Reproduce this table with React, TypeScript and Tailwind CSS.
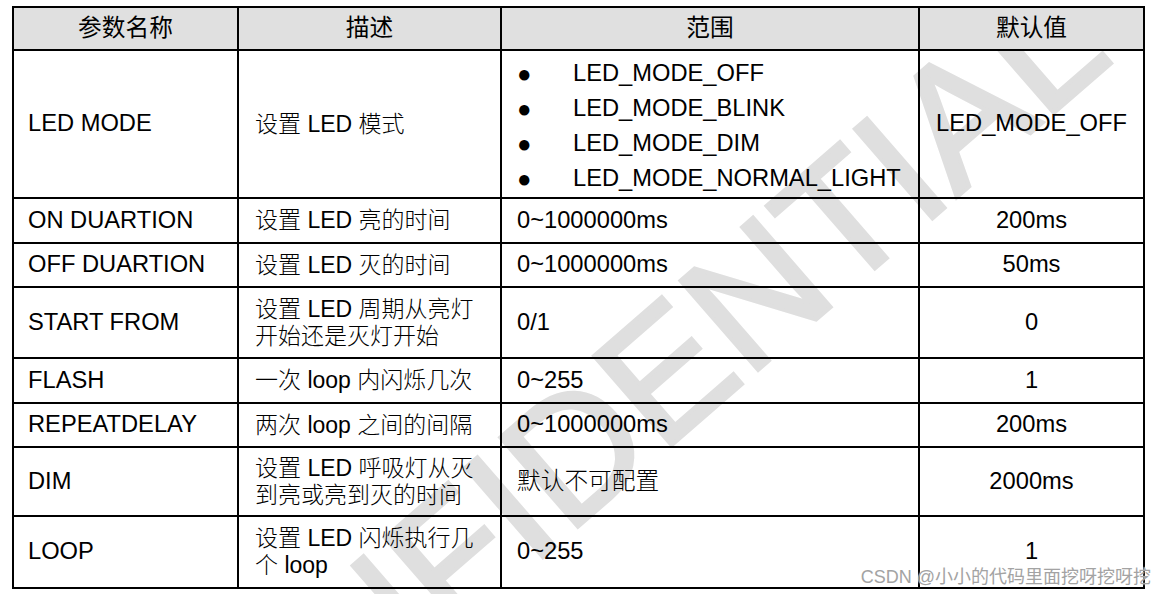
import React from 'react';

type Row = {
  name: string;
  desc: string[];
  range: string | string[];
  def: string;
  h: string;
};

const rows: Row[] = [
  { name: 'LED MODE', desc: ['设置 LED 模式'], range: ['LED_MODE_OFF', 'LED_MODE_BLINK', 'LED_MODE_DIM', 'LED_MODE_NORMAL_LIGHT'], def: 'LED_MODE_OFF', h: 'h-[148px]' },
  { name: 'ON DUARTION', desc: ['设置 LED 亮的时间'], range: '0~1000000ms', def: '200ms', h: 'h-[45px]' },
  { name: 'OFF DUARTION', desc: ['设置 LED 灭的时间'], range: '0~1000000ms', def: '50ms', h: 'h-[44px]' },
  { name: 'START FROM', desc: ['设置 LED 周期从亮灯', '开始还是灭灯开始'], range: '0/1', def: '0', h: 'h-[71px]' },
  { name: 'FLASH', desc: ['一次 loop 内闪烁几次'], range: '0~255', def: '1', h: 'h-[45px]' },
  { name: 'REPEATDELAY', desc: ['两次 loop 之间的间隔'], range: '0~1000000ms', def: '200ms', h: 'h-[44px]' },
  { name: 'DIM', desc: ['设置 LED 呼吸灯从灭', '到亮或亮到灭的时间'], range: '默认不可配置', def: '2000ms', h: 'h-[69px]' },
  { name: 'LOOP', desc: ['设置 LED 闪烁执行几', '个 loop'], range: '0~255', def: '1', h: 'h-[72px]' },
];

const cell = 'border-2 border-black align-middle';

const App: React.FC = () => {
  return (
    <div
      className="relative w-[1166px] h-[594px] overflow-hidden bg-white pl-[12px] pt-[6px] text-black"
      style={{ fontFamily: '"Liberation Sans", "Noto Sans CJK SC", sans-serif' }}
    >
      {/* watermark, drawn under the table */}
      <div className="absolute left-[600px] top-[428px] z-0 -translate-x-1/2 -translate-y-1/2 -rotate-[41deg] whitespace-nowrap text-[172px] leading-none text-[#dfdfdf] [-webkit-text-stroke:4px_#dfdfdf]">
        CONFIDENTIAL
      </div>

      <table className="relative z-10 w-[1133px] table-fixed border-collapse text-[23.7px]">
        <colgroup>
          <col className="w-[225px]" />
          <col className="w-[263px]" />
          <col className="w-[418px]" />
          <col className="w-[225px]" />
        </colgroup>
        <thead>
          <tr className="h-[43px] bg-[#e0e0e0]">
            <th className={`${cell} font-normal text-center`}>参数名称</th>
            <th className={`${cell} font-normal text-center`}>描述</th>
            <th className={`${cell} font-normal text-center`}>范围</th>
            <th className={`${cell} font-normal text-center`}>默认值</th>
          </tr>
        </thead>
        <tbody className="font-light">
          {rows.map((r) => (
            <tr key={r.name} className={r.h}>
              <td className={`${cell} pl-[14px]`}>{r.name}</td>
              <td className={`${cell} pl-[16px] text-[23px] leading-[27px]`}>
                {r.desc.map((d, i) => (
                  <div key={i}>{d}</div>
                ))}
              </td>
              <td className={`${cell} pl-[15px]`}>
                {Array.isArray(r.range) ? (
                  <ul className="pt-[4px]">
                    {r.range.map((x) => (
                      <li key={x} className="flex h-[35px] items-center">
                        <span className="w-[56px] text-[24px] leading-none">●</span>
                        <span>{x}</span>
                      </li>
                    ))}
                  </ul>
                ) : (
                  r.range
                )}
              </td>
              <td className={`${cell} text-center`}>{r.def}</td>
            </tr>
          ))}
        </tbody>
      </table>

      <div className="absolute bottom-[8px] right-[15px] z-20 whitespace-nowrap text-[18px] leading-none text-[#a3a3a3] [text-shadow:0_0_2px_#fff]">
        CSDN @小小的代码里面挖呀挖呀挖
      </div>
    </div>
  );
};

export default App;
